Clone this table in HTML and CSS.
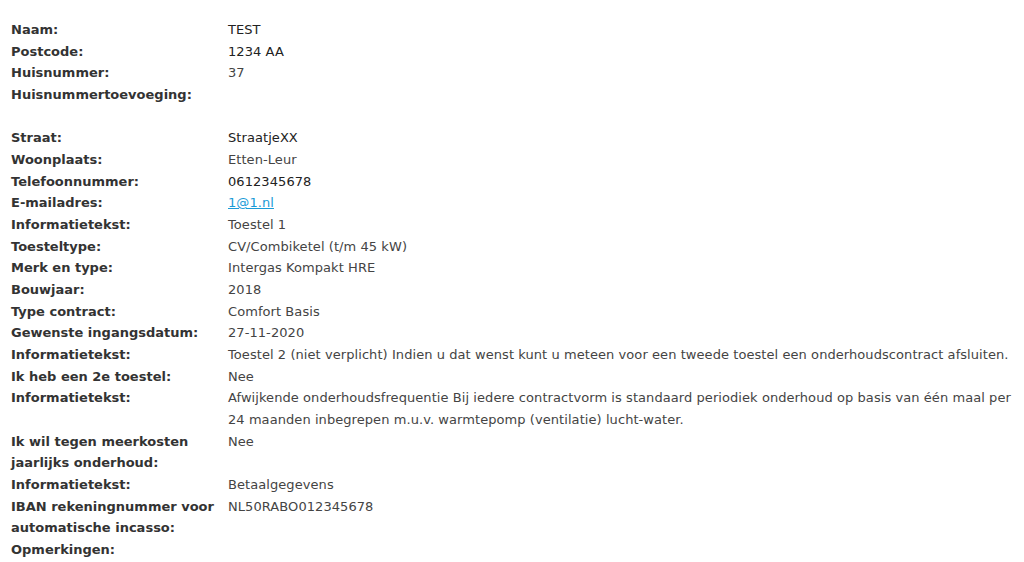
FILE: index.html
```html
<!DOCTYPE html>
<html lang="nl">
<head>
<meta charset="utf-8">
<title>Overzicht</title>
<link rel="stylesheet" href="styles.css">
</head>
<body>
<div class="summary">
  <div class="row"><div class="label">Naam:</div><div class="value dark">TEST</div></div>
  <div class="row"><div class="label">Postcode:</div><div class="value dark">1234 AA</div></div>
  <div class="row"><div class="label">Huisnummer:</div><div class="value">37</div></div>
  <div class="row"><div class="label">Huisnummertoevoeging:</div><div class="value"></div></div>
  <div class="row spacer"><div class="label"></div><div class="value"></div></div>
  <div class="row"><div class="label">Straat:</div><div class="value dark">StraatjeXX</div></div>
  <div class="row"><div class="label">Woonplaats:</div><div class="value">Etten-Leur</div></div>
  <div class="row"><div class="label">Telefoonnummer:</div><div class="value dark">0612345678</div></div>
  <div class="row"><div class="label">E-mailadres:</div><div class="value"><a class="mail" href="#">1@1.nl</a></div></div>
  <div class="row"><div class="label">Informatietekst:</div><div class="value">Toestel 1</div></div>
  <div class="row"><div class="label">Toesteltype:</div><div class="value">CV/Combiketel (t/m 45 kW)</div></div>
  <div class="row"><div class="label">Merk en type:</div><div class="value">Intergas Kompakt HRE</div></div>
  <div class="row"><div class="label">Bouwjaar:</div><div class="value">2018</div></div>
  <div class="row"><div class="label">Type contract:</div><div class="value">Comfort Basis</div></div>
  <div class="row"><div class="label">Gewenste ingangsdatum:</div><div class="value">27-11-2020</div></div>
  <div class="row"><div class="label">Informatietekst:</div><div class="value">Toestel 2 (niet verplicht) Indien u dat wenst kunt u meteen voor een tweede toestel een onderhoudscontract afsluiten.</div></div>
  <div class="row"><div class="label">Ik heb een 2e toestel:</div><div class="value">Nee</div></div>
  <div class="row"><div class="label">Informatietekst:</div><div class="value">Afwijkende onderhoudsfrequentie Bij iedere contractvorm is standaard periodiek onderhoud op basis van één maal per 24 maanden inbegrepen m.u.v. warmtepomp (ventilatie) lucht-water.</div></div>
  <div class="row"><div class="label">Ik wil tegen meerkosten jaarlijks onderhoud:</div><div class="value">Nee</div></div>
  <div class="row"><div class="label">Informatietekst:</div><div class="value">Betaalgegevens</div></div>
  <div class="row"><div class="label">IBAN rekeningnummer voor automatische incasso:</div><div class="value">NL50RABO012345678</div></div>
  <div class="row"><div class="label">Opmerkingen:</div><div class="value"></div></div>
</div>
</body>
</html>
```

FILE: styles.css
```css
html, body {
  margin: 0;
  padding: 0;
  background: #ffffff;
}

body {
  font-family: "DejaVu Sans", Verdana, sans-serif;
  font-size: 13px;
  line-height: 21.67px;
  color: #444444;
}

.summary {
  padding: 19px 8px 0 11px;
  display: flex;
  flex-direction: column;
}

.row {
  display: grid;
  grid-template-columns: 217px 1fr;
  column-gap: 0;
}

.spacer {
  height: 21.67px;
}

.label {
  font-weight: bold;
  color: #333333;
  padding-right: 10px;
}

.value {
  color: #444444;
  letter-spacing: 0.07px;
}

.value.dark {
  color: #222222;
}

.mail {
  color: #1a9bd7;
  text-decoration: underline;
}
```
